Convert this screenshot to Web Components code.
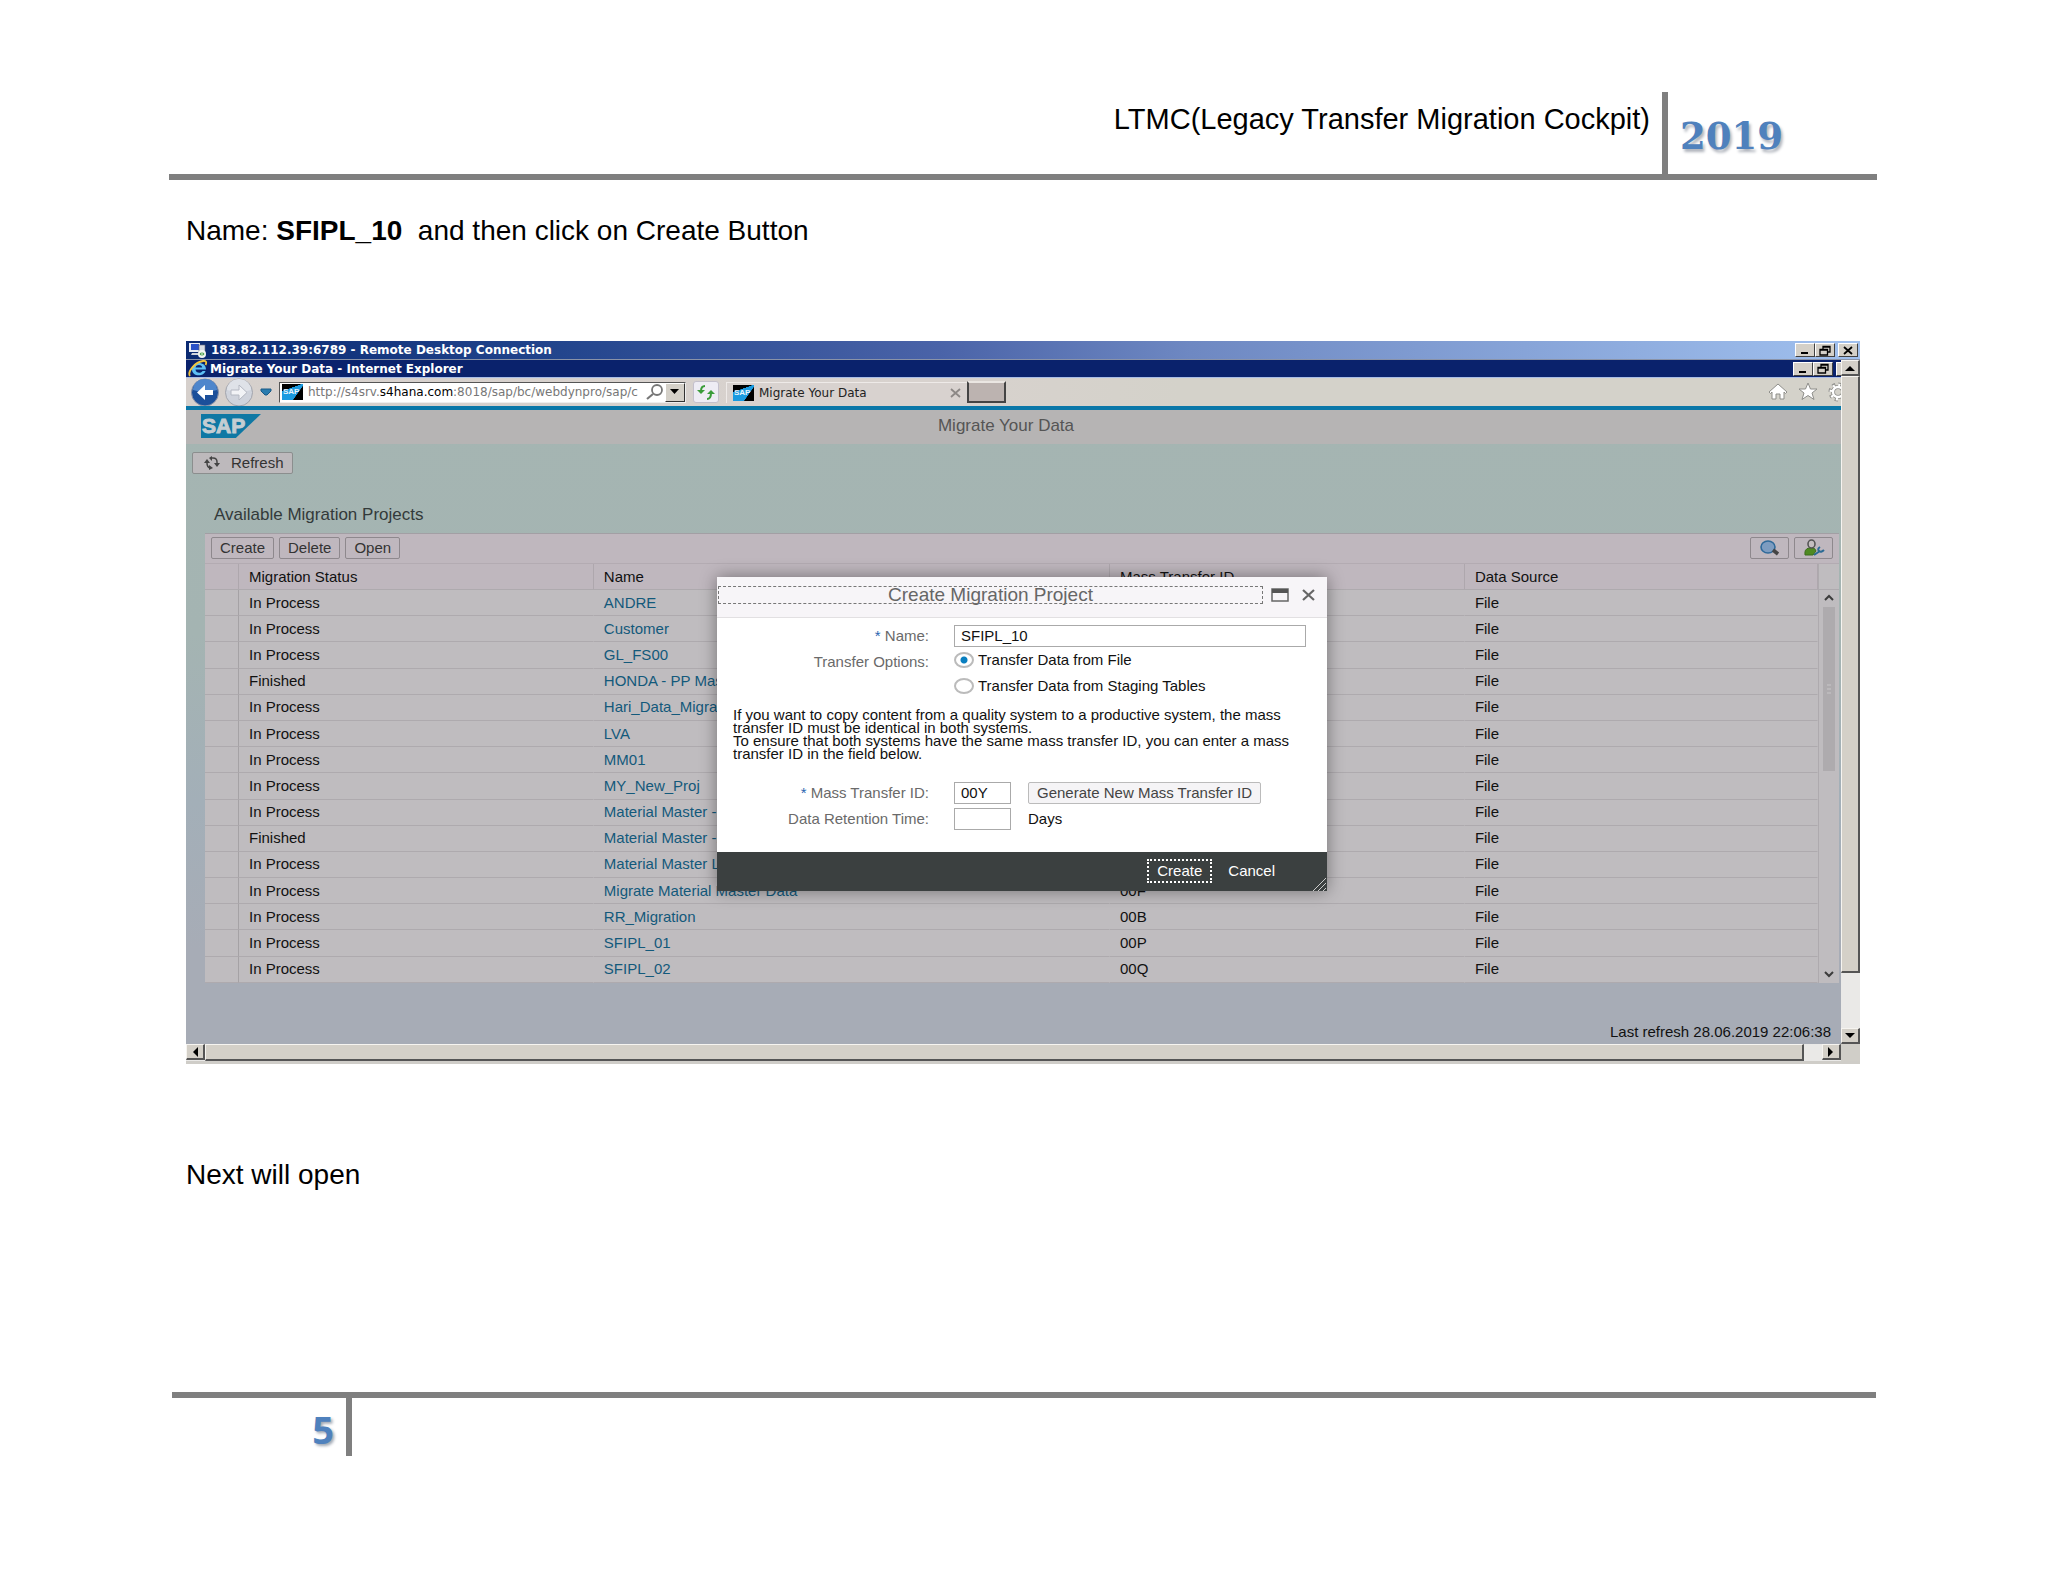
<!DOCTYPE html>
<html lang="en">
<head>
<meta charset="utf-8">
<title>LTMC (Legacy Transfer Migration Cockpit)</title>
<style>
    body {
        margin: 0;
        background: #fff;
        color: #000;
        font-family: "Liberation Sans", Arial, sans-serif;
        font-size: 28px;
        line-height: 32px;
    }

    main {
        padding: 35px 188px 0 186px;
    }

    p {
        margin: 0;
    }

    remote-window {
        margin: 94px 0 95px;
    }
</style>
</head>
<body>

<doc-header year="2019">LTMC(Legacy Transfer Migration Cockpit)</doc-header>

<main>
    <p>Name: <b>SFIPL_10</b>&nbsp; and then click on Create Button</p>

    <remote-window>
        <title-bar slot="title" kind="remote">183.82.112.39:6789 - Remote Desktop Connection</title-bar>
        <title-bar kind="browser">Migrate Your Data - Internet Explorer</title-bar>
        <browser-bar></browser-bar>
        <migration-page></migration-page>
        <create-dialog slot="dialog"></create-dialog>
    </remote-window>

    <p>Next will open</p>
</main>

<doc-footer>5</doc-footer>

<script>
// Base class: puts the markup of each element in an open shadow root
class BaseElement extends HTMLElement {
    constructor() {
        super();
        const shadow = this.attachShadow({ mode: 'open' });
        const template = document.createElement('template');
        template.innerHTML = this.render();
        shadow.appendChild(template.content.cloneNode(true));
    }
}

class DocHeader extends BaseElement {
    render() {
        return `
            <style>
                :host {
                    display: flex;
                    justify-content: flex-end;
                    margin: 0 171px 0 169px;
                    padding-top: 92px;
                    border-bottom: 6px solid #7f7f7f;
                    font-size: 29px;
                }
                .title {
                    padding: 11px 12px 0 0;
                }
                .year {
                    box-sizing: border-box;
                    width: 215px;
                    height: 82px;
                    padding: 28px 0 0 12px;
                    border-left: 6px solid #7f7f7f;
                    color: #4f81bd;
                    font: bold 37px/32px "DejaVu Serif", serif;
                    text-shadow: 2px 3px 3px #b0b4bc;
                }
            </style>
            <div class="title"><slot></slot></div>
            <div class="year"></div>
        `;
    }

    connectedCallback() {
        this.shadowRoot.querySelector('.year').textContent = this.getAttribute('year');
    }
}

class DocFooter extends BaseElement {
    render() {
        return `
            <style>
                :host {
                    display: block;
                    margin: 201px 172px 0;
                    border-top: 6px solid #7f7f7f;
                }
                .page {
                    box-sizing: border-box;
                    width: 180px;
                    height: 58px;
                    padding: 14px 12px 0 0;
                    border-right: 6px solid #7f7f7f;
                    color: #4f81bd;
                    font: bold 38px/34px "Open Sans", sans-serif;
                    text-align: right;
                    text-shadow: 2px 2px 3px #a0a8b4;
                }
            </style>
            <div class="page"><slot></slot></div>
        `;
    }
}

class TitleBar extends BaseElement {
    render() {
        return `
            <style>
                :host {
                    display: flex;
                    align-items: center;
                    box-sizing: border-box;
                    height: 18px;
                    padding: 0 2px;
                    background: #0a226c;
                    border-bottom: 1px solid #a9bde6;
                    color: #fff;
                    font: bold 12px/16px "DejaVu Sans", Verdana, sans-serif;
                }
                :host([kind="remote"]) {
                    height: 19px;
                    background: linear-gradient(90deg, #0a2a72 0%, #1f428a 20%, #4a63a8 45%, #6e88c2 60%, #a0c0ee 100%);
                    border-bottom-color: #8a93a8;
                }
                :host([kind="browser"]) {
                    padding-right: 0;
                }
                .icon {
                    width: 20px;
                    height: 17px;
                    margin-right: 3px;
                }
                .title {
                    flex: 1;
                    white-space: nowrap;
                }
                button {
                    box-sizing: border-box;
                    width: 20px;
                    height: 14px;
                    padding: 0;
                    border: 1px solid;
                    border-color: #fff #404040 #404040 #fff;
                    background: #d4d0c8;
                }
                button svg {
                    display: block;
                    margin: auto;
                }
                .close {
                    margin-left: 3px;
                }
                :host([kind="browser"]) .close {
                    width: 5px;
                    border-right: 0;
                    overflow: hidden;
                }
                :host([kind="browser"]) .close svg,
                :host([kind="browser"]) .pc,
                :host([kind="remote"]) .ie {
                    display: none;
                }
                :host([kind="browser"]) .icon {
                    margin-right: 2px;
                }
            </style>
            <svg class="icon pc" viewBox="0 0 20 17">
                <rect x="1" y="1" width="11" height="9" fill="#e8ecf4"/>
                <rect x="3" y="2" width="8" height="6" fill="#2a52c8"/>
                <path d="M4 11h7l1 2H3z" fill="#cfd3dc"/>
                <rect x="11" y="3" width="6" height="11" fill="#d8dce4" stroke="#667" stroke-width=".6"/>
                <circle cx="14" cy="12" r="4" fill="#f4f6f2"/>
                <path d="M11.500 12l2-2v4zM16.500 12l-2 2v-4z" fill="#3c9a3c"/>
            </svg>
            <svg class="icon ie" viewBox="0 0 20 17">
                <path d="M18 9.500H7.500c.2 4 6 4.200 7 1.500h3c-1.500 6-14 6-13.500-2C4.500 1 18 1 18 9.500zM7.600 7.500h6.600c-.6-3.200-6-3.200-6.600 0z" fill="#5ec0f4"/>
                <path d="M2 16C-1 12 7 2 15 1c3-.4 4 1 2.500 4" fill="none" stroke="#f2c53c" stroke-width="1.800"/>
            </svg>
            <span class="title"><slot></slot></span>
            <button aria-label="Minimize"><svg width="14" height="10"><path d="M3 8h7" stroke="#000" stroke-width="2"/></svg></button>
            <button aria-label="Restore"><svg width="14" height="11"><path d="M5 4V1.500h7V7h-2M5 2h7M2 4.500h7.500V10H2zM2 5h8" fill="none" stroke="#000" stroke-width="1.300"/></svg></button>
            <button class="close" aria-label="Close"><svg width="14" height="11"><path d="M3 2l8 7M11 2l-8 7" stroke="#000" stroke-width="1.800"/></svg></button>
        `;
    }
}

class SapLogo extends BaseElement {
    render() {
        return `
            <style>
                :host {
                    display: block;
                    box-sizing: border-box;
                    width: 60px;
                    height: 24px;
                    padding-left: 1px;
                    background: #0f78a4;
                    clip-path: polygon(0 0, 100% 0, 58% 100%, 0 100%);
                    color: #c4cdd2;
                    font: bold 21px/24px "Liberation Sans", sans-serif;
                    -webkit-text-stroke: 1px;
                }
                :host([small]) {
                    width: 21px;
                    height: 16px;
                    padding: 0 0 0 1px;
                    background: linear-gradient(160deg, #000 30%, transparent 31%), linear-gradient(125deg, #1a9ae0 68%, #000 70%);
                    clip-path: none;
                    color: #e8f4fc;
                    font-size: 8px;
                    line-height: 16px;
                    -webkit-text-stroke: 0;
                }
            </style>
            SAP
        `;
    }
}

class BrowserBar extends BaseElement {
    render() {
        return `
            <style>
                :host {
                    display: flex;
                    align-items: center;
                    box-sizing: border-box;
                    height: 32px;
                    padding: 0 0 0 4px;
                    background: linear-gradient(90deg, #d6d0cc, #d8d2ce 45%, #d4d2ca 60%);
                    border-bottom: 4px solid #0a77a8;
                    color: #222;
                    font: 12px/16px "DejaVu Sans", Verdana, sans-serif;
                    overflow: hidden;
                }
                button {
                    display: flex;
                    align-items: center;
                    justify-content: center;
                    padding: 0;
                    border: 0;
                    background: none;
                }
                .address {
                    display: flex;
                    align-items: center;
                    box-sizing: border-box;
                    width: 407px;
                    height: 21px;
                    margin-left: 1px;
                    border: 1px solid #6c6c6c;
                    border-color: #555 #eee #eee #555;
                    background: #fff;
                }
                .address sap-logo {
                    margin: 0 5px 0 2px;
                }
                .url {
                    flex: 1;
                    color: #777;
                    white-space: nowrap;
                    overflow: hidden;
                    outline: none;
                }
                .url b {
                    color: #000;
                    font-weight: normal;
                }
                .drop {
                    width: 20px;
                    height: 19px;
                    border: 1px solid;
                    border-color: #fff #333 #333 #fff;
                    background: #d4d0c8;
                }
                .reload {
                    box-sizing: border-box;
                    width: 26px;
                    height: 22px;
                    margin: 0 7px;
                    border: 1px solid #c4c0cc;
                    border-radius: 3px;
                    background: #eeecf4;
                }
                .tab {
                    display: flex;
                    align-items: center;
                    gap: 5px;
                    box-sizing: border-box;
                    width: 241px;
                    height: 21px;
                    padding: 0 6px;
                    border: 1px solid #eeeae8;
                    border-width: 1px 0 0 1px;
                    background: #d8d2cf;
                }
                .tab span {
                    flex: 1;
                }
                .new {
                    box-sizing: border-box;
                    width: 39px;
                    height: 22px;
                    border: 2px solid;
                    border-color: #eae6e2 #444 #444 #444;
                    background: #bcb3b0;
                }
                .tools {
                    display: flex;
                    gap: 8px;
                    margin-left: auto;
                    margin-right: -8px;
                }
            </style>
            <button aria-label="Back">
                <svg width="32" height="29" viewBox="0 0 32 29">
                    <circle cx="15" cy="14.500" r="13.500" fill="#1b4f9a" stroke="#8a93a8"/>
                    <path d="M3 12a12 11 0 0 1 24 0q-12 4-24 0z" fill="#4e86cc"/>
                    <path d="M15 7l-8 7.500 8 7.500v-5h8v-5h-8z" fill="#fff"/>
                </svg>
            </button>
            <button aria-label="Forward">
                <svg width="34" height="29" viewBox="0 0 34 29">
                    <circle cx="17" cy="14.500" r="13.500" fill="#cfd3dc" stroke="#a2a4ac"/>
                    <path d="M5 12a12 11 0 0 1 24 0q-12 4-24 0z" fill="#dfe2e8"/>
                    <path d="M17 7l8 7.500-8 7.500v-5H9v-5h8z" fill="#f2f3f6" stroke="#b4b8c2"/>
                </svg>
            </button>
            <button aria-label="Recent pages">
                <svg width="22" height="12"><path d="M5 3h10v2l-4 4h-2L5 5z" fill="#2a7cae" stroke="#1b5a86"/></svg>
            </button>
            <div class="address">
                <sap-logo small></sap-logo>
                <div class="url" role="textbox" aria-label="Address" contenteditable="true">http://s4srv.<b>s4hana.com</b>:8018/sap/bc/webdynpro/sap/c</div>
                <button aria-label="Search"><svg width="20" height="18"><circle cx="12" cy="7" r="5" fill="none" stroke="#777" stroke-width="1.800"/><path d="M8 11l-6 5" stroke="#777" stroke-width="2.200"/></svg></button>
                <button class="drop" aria-label="Show history"><svg width="12" height="8"><path d="M1 1h9L5.500 6z"/></svg></button>
            </div>
            <button class="reload" aria-label="Reload">
                <svg width="18" height="15" viewBox="0 0 18 15"><path d="M8 1Q4 1 4 6M10 14q4 0 4-6" fill="none" stroke="#3a9c3a" stroke-width="2"/><path d="M0 5h8l-4 4zM10 9h8l-4-4z" fill="#3a9c3a"/></svg>
            </button>
            <div class="tab">
                <sap-logo small></sap-logo>
                <span>Migrate Your Data</span>
                <button aria-label="Close tab"><svg width="11" height="10"><path d="M1 1l9 8M10 1L1 9" stroke="#8c8886" stroke-width="1.800"/></svg></button>
            </div>
            <button class="new" aria-label="New tab"></button>
            <div class="tools">
                <button aria-label="Home"><svg width="22" height="20"><path d="M11 2l9 8-1.500 1.500L17 10v7h-4v-5H9v5H5v-7l-1.500 1.500L2 10z" fill="#fff" stroke="#8e8e8a"/></svg></button>
                <button aria-label="Favorites"><svg width="22" height="20"><path d="M11 1l2.500 6H20l-5 4 2 6.500-6-4-6 4L7 11 2 7h6.500z" fill="#fff" stroke="#8e8e8a"/></svg></button>
                <button aria-label="Tools"><svg width="22" height="20"><circle cx="11" cy="10" r="7.500" fill="none" stroke="#8e8e8a" stroke-width="4" stroke-dasharray="3 2.890"/><circle cx="11" cy="10" r="5" fill="none" stroke="#8e8e8a" stroke-width="4"/><circle cx="11" cy="10" r="7" fill="none" stroke="#fff" stroke-width="3" stroke-dasharray="2 3.500"/><circle cx="11" cy="10" r="5" fill="none" stroke="#fff" stroke-width="2.400"/></svg></button>
            </div>
        `;
    }
}

class ScrollBar extends BaseElement {
    render() {
        return `
            <style>
                :host {
                    display: flex;
                    background: #eae9e7;
                }
                :host([vertical]) {
                    flex-direction: column;
                    width: 19px;
                }
                :host(:not([vertical])) {
                    height: 17px;
                }
                button, .thumb {
                    box-sizing: border-box;
                    flex: none;
                    padding: 0;
                    border: 1px solid;
                    border-width: 1px 2px 2px 1px;
                    border-color: #f6f4f0 #555 #555 #f6f4f0;
                    background: #d4d0c8;
                }
                button {
                    display: flex;
                    align-items: center;
                    justify-content: center;
                    width: 19px;
                    height: 16px;
                }
                .thumb {
                    flex: 1;
                }
                .gap {
                    flex: none;
                    width: 18px;
                    height: 55px;
                }
                svg {
                    transform: rotate(-90deg);
                }
                .end svg {
                    transform: rotate(90deg);
                }
                :host([vertical]) svg {
                    transform: none;
                }
                :host([vertical]) .end svg {
                    transform: rotate(180deg);
                }
            </style>
            <button aria-label="Scroll back"><svg width="10" height="6"><path d="M0 6l5-5 5 5z"/></svg></button>
            <div class="thumb"></div>
            <div class="gap"></div>
            <button class="end" aria-label="Scroll on"><svg width="10" height="6"><path d="M0 6l5-5 5 5z"/></svg></button>
        `;
    }
}

class RemoteWindow extends BaseElement {
    render() {
        return `
            <style>
                :host {
                    display: block;
                    position: relative;
                }
                .frame {
                    display: grid;
                    grid-template-columns: 1fr 19px;
                    grid-template-rows: auto 17px;
                    border-bottom: 3px solid #cfcdc8;
                }
                .screen {
                    min-width: 0;
                }
                .corner {
                    background: #d0cec8;
                }
                ::slotted([slot="dialog"]) {
                    position: absolute;
                    top: 236px;
                    left: calc(50% - 306px);
                }
            </style>
            <slot name="title"></slot>
            <div class="frame">
                <div class="screen"><slot></slot></div>
                <scroll-bar vertical></scroll-bar>
                <scroll-bar></scroll-bar>
                <div class="corner"></div>
            </div>
            <slot name="dialog"></slot>
        `;
    }
}

class MigrationPage extends BaseElement {
    render() {
        return `
            <style>
                :host {
                    display: block;
                    background: linear-gradient(#a5b5b2 0%, #a4b4b2 35%, #a3afb8 62%, #a7acb6 85%);
                    color: #222;
                    font-size: 15px;
                    line-height: 18px;
                }
                header {
                    display: flex;
                    align-items: center;
                    box-sizing: border-box;
                    height: 34px;
                    padding: 0 15px 2px;
                    background: #b6b4b4;
                }
                h1 {
                    flex: 1;
                    margin: 0 75px 0 0;
                    color: #555;
                    font-size: 17px;
                    font-weight: normal;
                    text-align: center;
                }
                .refresh {
                    display: flex;
                    align-items: center;
                    gap: 11px;
                    box-sizing: border-box;
                    height: 22px;
                    margin: 8px 0 31px 6px;
                    padding: 0 8px 0 11px;
                    border: 1px solid #8b8e8e;
                    border-radius: 2px;
                    background: #bdb9bc;
                    color: #333;
                    font: 15px/18px "Liberation Sans", sans-serif;
                }
                h2 {
                    margin: 0 0 8px 28px;
                    color: #333a3a;
                    font-size: 17px;
                    line-height: 20px;
                    font-weight: normal;
                }
                project-table {
                    margin: 0 2px 0 19px;
                }
                footer {
                    padding: 40px 10px 3px;
                    text-align: right;
                    color: #111;
                }
            </style>
            <header>
                <sap-logo></sap-logo>
                <h1>Migrate Your Data</h1>
            </header>
            <button class="refresh">
                <svg width="16" height="14" viewBox="0 0 16 14"><path d="M6 12Q3 11 3 7V5M7 2h2q4 0 4 4v3" fill="none" stroke="#444" stroke-width="1.500"/><path d="M0 7l3-4 3 4zM10 7h6l-3 4zM8 0v5L5 2zM5 9l4 3-4 2z" fill="#444"/></svg>
                Refresh
            </button>
            <h2>Available Migration Projects</h2>
            <project-table></project-table>
            <footer>Last refresh 28.06.2019 22:06:38</footer>
        `;
    }
}

// status, name, mass transfer ID
const PROJECTS = [
    ['In Process', 'ANDRE', ''],
    ['In Process', 'Customer', ''],
    ['In Process', 'GL_FS00', ''],
    ['Finished', 'HONDA - PP Mas', ''],
    ['In Process', 'Hari_Data_Migrat', ''],
    ['In Process', 'LVA', ''],
    ['In Process', 'MM01', ''],
    ['In Process', 'MY_New_Proj', ''],
    ['In Process', 'Material Master -1', ''],
    ['Finished', 'Material Master -2', ''],
    ['In Process', 'Material Master L', ''],
    ['In Process', 'Migrate Material Master Data', '00F'],
    ['In Process', 'RR_Migration', '00B'],
    ['In Process', 'SFIPL_01', '00P'],
    ['In Process', 'SFIPL_02', '00Q']
];

class ProjectTable extends BaseElement {
    render() {
        const rows = PROJECTS.map(([status, name, id]) => `
            <tr>
                <td></td>
                <td>${status}</td>
                <td><a href="#">${name}</a></td>
                <td>${id}</td>
                <td>File</td>
            </tr>`).join('');

        return `
            <style>
                :host {
                    display: block;
                    border-top: 1px solid #a29fa4;
                    background: #bfbcbf;
                    color: #111;
                    font-size: 15px;
                    line-height: 18px;
                }
                .toolbar {
                    display: flex;
                    gap: 5px;
                    height: 22px;
                    padding: 3px 6px 4px;
                    background: #bfb7be;
                    border-bottom: 1px solid #b3abb2;
                }
                button {
                    display: flex;
                    align-items: center;
                    justify-content: center;
                    box-sizing: border-box;
                    padding: 0 8px;
                    border: 1px solid #8e888d;
                    border-radius: 2px;
                    background: none;
                    color: #333;
                    font: 15px/18px "Liberation Sans", sans-serif;
                }
                .icon {
                    width: 39px;
                    padding: 0;
                }
                .search {
                    margin-left: auto;
                }
                .body {
                    display: flex;
                }
                table {
                    flex: 1;
                    height: 419px;
                    border-collapse: separate;
                    border-spacing: 0;
                    table-layout: fixed;
                }
                th, td {
                    padding: 0 0 0 10px;
                    border-right: 1px solid transparent;
                    border-bottom: 1px solid #aeaaae;
                    text-align: left;
                    font-weight: normal;
                    white-space: nowrap;
                }
                th {
                    height: 25px;
                    background: #bfb7be;
                    border-right-color: #aea7ad;
                }
                td:first-child {
                    border-right-color: #a5a2a5;
                }
                a {
                    color: #13597b;
                    text-decoration: none;
                }
                .mark { width: 34px; }
                .status { width: 22%; }
                .name { width: 32%; }
                .id { width: 22%; }
                .scroll {
                    display: flex;
                    flex-direction: column;
                    align-items: center;
                    width: 20px;
                    border-left: 1px solid #aeaaae;
                }
                .scroll .space {
                    align-self: stretch;
                    height: 25px;
                    border-bottom: 1px solid #aeaaae;
                }
                .scroll .thumb {
                    display: flex;
                    align-items: center;
                    justify-content: center;
                    width: 12px;
                    height: 164px;
                    margin-bottom: auto;
                    background: #aeabae;
                }
            </style>
            <div class="toolbar">
                <button>Create</button>
                <button>Delete</button>
                <button>Open</button>
                <button class="icon search" aria-label="Search">
                    <svg width="22" height="18" viewBox="0 0 22 18"><ellipse cx="9" cy="8" rx="7" ry="6" fill="#7d9cc0" stroke="#2f6a9a" stroke-width="1.600"/><path d="M14 11l5 4" stroke="#444" stroke-width="3.600"/></svg>
                </button>
                <button class="icon" aria-label="Settings">
                    <svg width="22" height="18" viewBox="0 0 22 18"><path d="M2 16q-1-6 4-7h4q2 0 3 3l-3 4z" fill="#4f8a22" stroke="#3c6c1c"/><ellipse cx="8.500" cy="5" rx="3.500" ry="4" fill="#c4bec0" stroke="#555" stroke-width="1.600"/><path d="M11 16l6-4M17 8q-3 2-1 4t5-1" fill="none" stroke="#2a6a94" stroke-width="2"/></svg>
                </button>
            </div>
            <div class="body">
                <table>
                    <colgroup><col class="mark"><col class="status"><col class="name"><col class="id"><col></colgroup>
                    <thead>
                        <tr><th></th><th>Migration Status</th><th>Name</th><th>Mass Transfer ID</th><th>Data Source</th></tr>
                    </thead>
                    <tbody>${rows}</tbody>
                </table>
                <div class="scroll">
                    <div class="space"></div>
                    <svg width="12" height="17"><path d="M2 10l4-4 4 4" fill="none" stroke="#3c3c3c" stroke-width="2"/></svg>
                    <div class="thumb"><svg width="6" height="10"><path d="M1 1h4M1 5h4M1 9h4" stroke="#c8c6c8"/></svg></div>
                    <svg width="12" height="18"><path d="M2 7l4 4 4-4" fill="none" stroke="#3c3c3c" stroke-width="2"/></svg>
                </div>
            </div>
        `;
    }
}

class CreateDialog extends BaseElement {
    render() {
        return `
            <style>
                :host {
                    display: block;
                    width: 610px;
                    background: #fff;
                    box-shadow: 0 0 16px rgba(0, 0, 0, 0.4);
                    color: #111;
                    font-size: 15px;
                    line-height: 18px;
                }
                header {
                    display: flex;
                    align-items: center;
                    gap: 8px;
                    box-sizing: border-box;
                    height: 41px;
                    padding: 0 9px 4px 1px;
                    background: #f7f5f8;
                    border-bottom: 1px solid #e2e0e2;
                }
                h3 {
                    flex: 1;
                    margin: 0;
                    border: 1px dashed #777;
                    color: #666;
                    font-size: 19px;
                    line-height: 16px;
                    font-weight: normal;
                    text-align: center;
                }
                header button {
                    display: flex;
                    padding: 0;
                    border: 0;
                    background: none;
                }
                header button + button {
                    margin-left: 3px;
                }
                .form {
                    display: grid;
                    grid-template-columns: 212px 1fr;
                    column-gap: 25px;
                    row-gap: 4px;
                    align-items: center;
                    padding: 0 21px 0 0;
                }
                .first {
                    padding-top: 7px;
                }
                .caption {
                    color: #6a6a6a;
                    line-height: 22px;
                    text-align: right;
                }
                .caption i {
                    color: #2a66b0;
                    font-style: normal;
                }
                .line {
                    display: flex;
                    align-items: center;
                    gap: 17px;
                }
                input[type="text"] {
                    box-sizing: border-box;
                    width: 100%;
                    height: 22px;
                    padding: 0 6px 2px;
                    border: 1px solid #aaa;
                    background: #fff;
                    color: #111;
                    font: 15px/18px "Liberation Sans", sans-serif;
                }
                .line input[type="text"] {
                    width: 57px;
                }
                .option {
                    display: flex;
                    align-items: center;
                    align-self: start;
                    gap: 4px;
                    height: 18px;
                    margin-bottom: 4px;
                }
                input[type="radio"] {
                    appearance: none;
                    box-sizing: border-box;
                    width: 20px;
                    height: 16px;
                    margin: 0;
                    border: 2px solid #bbb;
                    border-radius: 50%;
                    background: #fff;
                }
                input[type="radio"]:checked {
                    background: radial-gradient(circle, #0a7fc0 3px, #fff 4px);
                }
                p {
                    margin: 9px 16px 22px;
                    line-height: 13px;
                }
                .generate {
                    height: 22px;
                    padding: 0 8px;
                    border: 1px solid #bbb;
                    border-radius: 2px;
                    background: #f5f4f6;
                    color: #444;
                    font: 15px/18px "Liberation Sans", sans-serif;
                }
                footer {
                    display: flex;
                    justify-content: flex-end;
                    align-items: center;
                    gap: 6px;
                    position: relative;
                    box-sizing: border-box;
                    height: 39px;
                    margin-top: 22px;
                    padding: 0 42px 2px 0;
                    background: #3b4040;
                }
                footer button {
                    height: 24px;
                    padding: 0 8px;
                    border: 2px dotted transparent;
                    background: none;
                    color: #fff;
                    font: 15px/18px "Liberation Sans", sans-serif;
                }
                footer .main {
                    border-color: #fff;
                }
                .grip {
                    position: absolute;
                    right: 0;
                    bottom: 0;
                }
            </style>
            <header>
                <h3>Create Migration Project</h3>
                <button aria-label="Maximize"><svg width="18" height="14"><rect x="1" y="1" width="16" height="12" fill="none" stroke="#666" stroke-width="1.500"/><path d="M1 3h16" stroke="#555" stroke-width="4"/></svg></button>
                <button aria-label="Close"><svg width="18" height="14"><path d="M3 2l11 10M14 2L3 12" stroke="#666" stroke-width="2.200"/></svg></button>
            </header>
            <div class="form first">
                <label class="caption" for="name"><i>*</i> Name:</label>
                <input type="text" id="name" value="SFIPL_10">
                <span class="caption">Transfer Options:</span>
                <label class="option"><input type="radio" name="source" checked>Transfer Data from File</label>
                <span></span>
                <label class="option"><input type="radio" name="source">Transfer Data from Staging Tables</label>
            </div>
            <p>If you want to copy content from a quality system to a productive system, the mass<br>transfer ID must be identical in both systems.<br>To ensure that both systems have the same mass transfer ID, you can enter a mass<br>transfer ID in the field below.</p>
            <div class="form">
                <label class="caption" for="id"><i>*</i> Mass Transfer ID:</label>
                <div class="line"><input type="text" id="id" value="00Y"><button class="generate">Generate New Mass Transfer ID</button></div>
                <label class="caption" for="days">Data Retention Time:</label>
                <div class="line"><input type="text" id="days">Days</div>
            </div>
            <footer>
                <button class="main">Create</button>
                <button>Cancel</button>
                <svg class="grip" width="15" height="14"><path d="M1 14L14 1M6 14l8-8M11 14l3-3" stroke="#ccc"/></svg>
            </footer>
        `;
    }
}

customElements.define('doc-header', DocHeader);
customElements.define('doc-footer', DocFooter);
customElements.define('title-bar', TitleBar);
customElements.define('sap-logo', SapLogo);
customElements.define('browser-bar', BrowserBar);
customElements.define('scroll-bar', ScrollBar);
customElements.define('project-table', ProjectTable);
customElements.define('migration-page', MigrationPage);
customElements.define('create-dialog', CreateDialog);
customElements.define('remote-window', RemoteWindow);
</script>
</body>
</html>
